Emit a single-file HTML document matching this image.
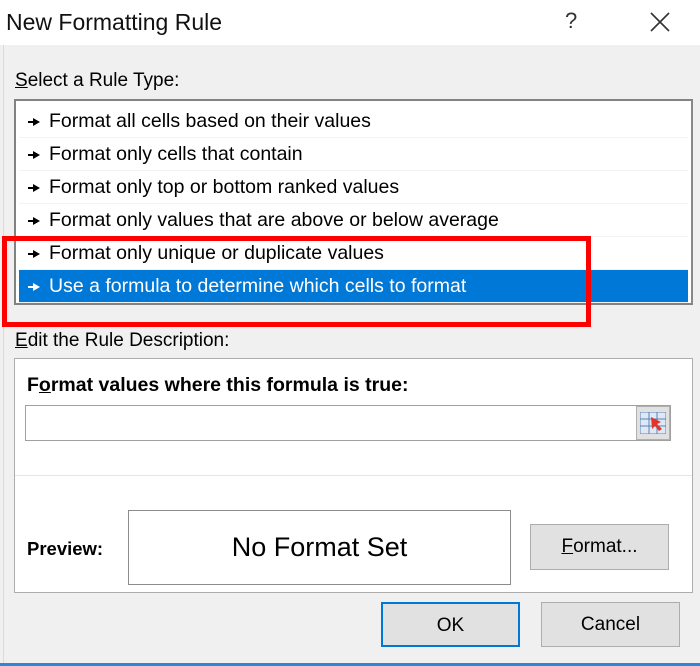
<!DOCTYPE html>
<html><head><style>
*{margin:0;padding:0;box-sizing:border-box}
body{width:700px;height:666px;background:#f0f0f0;font-family:"Liberation Sans",sans-serif;position:relative;overflow:hidden;color:#000}
.a{position:absolute}
.t{font-size:18px;white-space:nowrap}
.row{position:absolute;left:3px;right:3px;height:33px;line-height:33px;font-size:19.5px;padding-left:30px;border-bottom:1px solid #f2f2f2;white-space:nowrap}
.row:before{content:"";position:absolute;left:9px;top:16px;width:8px;height:2px;background:#000}
.row:after{content:"";position:absolute;left:10px;top:13px;border-left:7px solid #000;border-top:4px solid transparent;border-bottom:4px solid transparent;transform:translateX(4px)}
.sel{background:#0078d7;color:#fff}
.sel:before{background:#fff}.sel:after{border-left-color:#fff}
.btn{position:absolute;background:#e1e1e1;border:1px solid #adadad;font-size:19px;text-align:center}
</style></head><body>
<div class="a" style="left:0;top:0;width:700px;height:45px;background:#fff"></div>
<div class="a t" style="left:6px;top:9px;font-size:23px;color:#111">New Formatting Rule</div>
<div class="a" style="left:565px;top:8px;font-size:22px;color:#333">?</div>
<svg class="a" style="left:650px;top:12px" width="20" height="20"><path d="M1 1L19 19M19 1L1 19" stroke="#333" stroke-width="1.6"/></svg>
<div class="a" style="left:3px;top:45px;width:1px;height:621px;background:#dadada"></div>
<div class="a t" style="left:15px;top:70px;font-size:19px"><u>S</u>elect a Rule Type:</div>
<div class="a" style="left:14px;top:99px;width:679px;height:206px;background:#fff;border:2px solid #828282;border-right-color:#888">
<div class="row" style="top:4px">Format all cells based on their values</div>
<div class="row" style="top:37px">Format only cells that contain</div>
<div class="row" style="top:70px">Format only top or bottom ranked values</div>
<div class="row" style="top:103px">Format only values that are above or below average</div>
<div class="row" style="top:136px">Format only unique or duplicate values</div>
<div class="row sel" style="top:169px">Use a formula to determine which cells to format</div>
</div>
<div class="a" style="left:2px;top:236px;width:589px;height:91px;border:5px solid #ff0000"></div>
<div class="a t" style="left:15px;top:330px;font-size:19px"><u>E</u>dit the Rule Description:</div>
<div class="a" style="left:14px;top:358px;width:679px;height:235px;background:#fff;border:1px solid #adadad"></div>
<div class="a t" style="left:27px;top:374px;font-size:19.5px;font-weight:bold">F<u>o</u>rmat values where this formula is true:</div>
<div class="a" style="left:25px;top:405px;width:646px;height:36px;background:#fff;border:1px solid #a0a0a0"></div>
<div class="a" style="left:636px;top:406px;width:34px;height:34px;background:#e1e1e1;border:1px solid #b0b0b0"></div>
<svg class="a" style="left:640px;top:412px" width="26" height="22"><rect x="0" y="0" width="26" height="22" fill="#dfe9f5" stroke="#5b82b6"/><path d="M0 7H26M0 14H26M9 0V22M17 0V22" stroke="#5b82b6"/><path d="M11 5L21 10L17 12L22 17L19 19L15 14L12 17Z" fill="#e0352a"/></svg>
<div class="a" style="left:15px;top:475px;width:677px;height:1px;background:#e6e6e6"></div>
<div class="a t" style="left:27px;top:538px;font-size:18.5px;font-weight:bold">Preview:</div>
<div class="a" style="left:128px;top:510px;width:383px;height:75px;background:#fff;border:1px solid #8c8c8c;text-align:center;line-height:72px;font-size:27px">No Format Set</div>
<div class="btn" style="left:530px;top:524px;width:139px;height:46px;line-height:44px"><u>F</u>ormat...</div>
<div class="btn" style="left:381px;top:602px;width:139px;height:45px;line-height:43px;border:2px solid #0078d7">OK</div>
<div class="btn" style="left:541px;top:602px;width:139px;height:45px;line-height:43px">Cancel</div>
<div class="a" style="left:0;top:663px;width:700px;height:3px;background:#2b88d8"></div>
</body></html>
